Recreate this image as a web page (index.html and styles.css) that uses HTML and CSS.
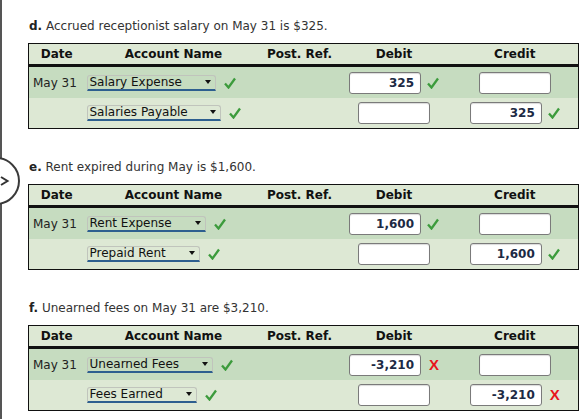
FILE: index.html
```html
<!DOCTYPE html>
<html>
<head>
<meta charset="utf-8">
<link rel="stylesheet" href="styles.css">
</head>
<body>
<div class="page">
  <div class="toggle">
    <svg width="12" height="14" viewBox="0 0 12 14"><polyline points="1,3 7.5,7 1,11" fill="none" stroke="#333" stroke-width="2"/></svg>
  </div>

  <section class="entry">
    <p class="title"><b>d.</b> Accrued receptionist salary on May 31 is $325.</p>
    <table class="journal">
      <colgroup><col class="c-date"><col class="c-acct"><col class="c-ref"><col class="c-debit"><col class="c-credit"></colgroup>
      <thead><tr><th>Date</th><th>Account Name</th><th>Post. Ref.</th><th>Debit</th><th>Credit</th></tr></thead>
      <tbody>
        <tr class="r1">
          <td class="date">May 31</td>
          <td class="acct"><div class="acct-wrap"><span class="sel w129">Salary Expense</span><span class="ok"><svg width="12" height="12" viewBox="0 0 12 12"><path d="M1 6.5 L4.5 10.5 L11 1.5" fill="none" stroke="#3c9b3c" stroke-width="2.3"/></svg></span></div></td>
          <td></td>
          <td class="amt"><div class="amt-wrap"><span class="inp">325</span><span class="ok"><svg width="12" height="12" viewBox="0 0 12 12"><path d="M1 6.5 L4.5 10.5 L11 1.5" fill="none" stroke="#3c9b3c" stroke-width="2.3"/></svg></span></div></td>
          <td class="amt"><div class="amt-wrap"><span class="inp"></span></div></td>
        </tr>
        <tr class="r2">
          <td class="date"></td>
          <td class="acct"><div class="acct-wrap"><span class="sel w134">Salaries Payable</span><span class="ok"><svg width="12" height="12" viewBox="0 0 12 12"><path d="M1 6.5 L4.5 10.5 L11 1.5" fill="none" stroke="#3c9b3c" stroke-width="2.3"/></svg></span></div></td>
          <td></td>
          <td class="amt"><div class="amt-wrap"><span class="inp"></span></div></td>
          <td class="amt"><div class="amt-wrap"><span class="inp">325</span><span class="ok"><svg width="12" height="12" viewBox="0 0 12 12"><path d="M1 6.5 L4.5 10.5 L11 1.5" fill="none" stroke="#3c9b3c" stroke-width="2.3"/></svg></span></div></td>
        </tr>
      </tbody>
    </table>
  </section>

  <section class="entry">
    <p class="title"><b>e.</b> Rent expired during May is $1,600.</p>
    <table class="journal">
      <colgroup><col class="c-date"><col class="c-acct"><col class="c-ref"><col class="c-debit"><col class="c-credit"></colgroup>
      <thead><tr><th>Date</th><th>Account Name</th><th>Post. Ref.</th><th>Debit</th><th>Credit</th></tr></thead>
      <tbody>
        <tr class="r1">
          <td class="date">May 31</td>
          <td class="acct"><div class="acct-wrap"><span class="sel w119">Rent Expense</span><span class="ok"><svg width="12" height="12" viewBox="0 0 12 12"><path d="M1 6.5 L4.5 10.5 L11 1.5" fill="none" stroke="#3c9b3c" stroke-width="2.3"/></svg></span></div></td>
          <td></td>
          <td class="amt"><div class="amt-wrap"><span class="inp">1,600</span><span class="ok"><svg width="12" height="12" viewBox="0 0 12 12"><path d="M1 6.5 L4.5 10.5 L11 1.5" fill="none" stroke="#3c9b3c" stroke-width="2.3"/></svg></span></div></td>
          <td class="amt"><div class="amt-wrap"><span class="inp"></span></div></td>
        </tr>
        <tr class="r2">
          <td class="date"></td>
          <td class="acct"><div class="acct-wrap"><span class="sel w113">Prepaid Rent</span><span class="ok"><svg width="12" height="12" viewBox="0 0 12 12"><path d="M1 6.5 L4.5 10.5 L11 1.5" fill="none" stroke="#3c9b3c" stroke-width="2.3"/></svg></span></div></td>
          <td></td>
          <td class="amt"><div class="amt-wrap"><span class="inp"></span></div></td>
          <td class="amt"><div class="amt-wrap"><span class="inp">1,600</span><span class="ok"><svg width="12" height="12" viewBox="0 0 12 12"><path d="M1 6.5 L4.5 10.5 L11 1.5" fill="none" stroke="#3c9b3c" stroke-width="2.3"/></svg></span></div></td>
        </tr>
      </tbody>
    </table>
  </section>

  <section class="entry">
    <p class="title"><b>f.</b> Unearned fees on May 31 are $3,210.</p>
    <table class="journal">
      <colgroup><col class="c-date"><col class="c-acct"><col class="c-ref"><col class="c-debit"><col class="c-credit"></colgroup>
      <thead><tr><th>Date</th><th>Account Name</th><th>Post. Ref.</th><th>Debit</th><th>Credit</th></tr></thead>
      <tbody>
        <tr class="r1">
          <td class="date">May 31</td>
          <td class="acct"><div class="acct-wrap"><span class="sel w126">Unearned Fees</span><span class="ok"><svg width="12" height="12" viewBox="0 0 12 12"><path d="M1 6.5 L4.5 10.5 L11 1.5" fill="none" stroke="#3c9b3c" stroke-width="2.3"/></svg></span></div></td>
          <td></td>
          <td class="amt"><div class="amt-wrap"><span class="inp">-3,210</span><span class="bad">X</span></div></td>
          <td class="amt"><div class="amt-wrap"><span class="inp"></span></div></td>
        </tr>
        <tr class="r2">
          <td class="date"></td>
          <td class="acct"><div class="acct-wrap"><span class="sel w110">Fees Earned</span><span class="ok"><svg width="12" height="12" viewBox="0 0 12 12"><path d="M1 6.5 L4.5 10.5 L11 1.5" fill="none" stroke="#3c9b3c" stroke-width="2.3"/></svg></span></div></td>
          <td></td>
          <td class="amt"><div class="amt-wrap"><span class="inp"></span></div></td>
          <td class="amt"><div class="amt-wrap"><span class="inp">-3,210</span><span class="bad">X</span></div></td>
        </tr>
      </tbody>
    </table>
  </section>
</div>
</body>
</html>
```

FILE: styles.css
```css
html, body {
  margin: 0;
  padding: 0;
  background: #fff;
}
body {
  font-family: "DejaVu Sans", Verdana, sans-serif;
  font-size: 12px;
  color: #222;
  overflow: hidden;
}
.page {
  position: relative;
  width: 585px;
  height: 419px;
  border-left: 2px solid #555;
  padding: 18px 0 0 26px;
  box-sizing: border-box;
}
.toggle {
  position: absolute;
  left: -30px;
  top: 157px;
  width: 44px;
  height: 44px;
  border: 2px solid #3a3a3a;
  border-radius: 50%;
  background: #fff;
  display: flex;
  align-items: center;
  justify-content: flex-end;
  box-sizing: content-box;
}
.toggle svg {
  margin-right: 6px;
}
.entry {
  margin: 0 0 30px 0;
}
.title {
  margin: 0 0 9px 1px;
  line-height: 16px;
  color: #333;
}
.title b {
  color: #222;
}
.journal {
  width: 550px;
  border-collapse: collapse;
  table-layout: fixed;
  border: 1px solid #111;
}
.c-date { width: 56px; }
.c-acct { width: 178px; }
.c-ref { width: 74px; }
.c-debit { width: 115px; }
.c-credit { width: 127px; }
.journal th {
  background: #dde8d4;
  font-weight: bold;
  color: #111;
  height: 20px;
  padding: 0;
  text-align: center;
  border-bottom: 3px solid #111;
}
.journal td {
  padding: 0;
}
.r1 td {
  background: #c6dcc0;
  height: 31px;
}
.r2 td {
  background: #dde8d4;
  height: 30px;
}
.date {
  padding-left: 4px !important;
  color: #222;
}
.acct-wrap {
  display: flex;
  align-items: center;
  padding-left: 2px;
}
.sel {
  position: relative;
  box-sizing: border-box;
  height: 16px;
  line-height: 12px;
  padding-left: 2px;
  border: 1px solid #c0c4bc;
  border-bottom: 2px solid #2d5f8f;
  border-radius: 3px 3px 0 0;
  color: #111;
  white-space: nowrap;
}
.sel::after {
  content: "";
  position: absolute;
  right: 4px;
  top: 4px;
  border-left: 3px solid transparent;
  border-right: 3px solid transparent;
  border-top: 4px solid #111;
}
.w129 { width: 129px; }
.w134 { width: 134px; }
.w119 { width: 119px; }
.w113 { width: 113px; }
.w126 { width: 126px; }
.w110 { width: 110px; }
.ok {
  display: inline-flex;
  margin-left: 8px;
}
.amt-wrap {
  display: flex;
  align-items: center;
  justify-content: center;
}
.inp {
  box-sizing: border-box;
  width: 72px;
  height: 22px;
  line-height: 20px;
  border: 1px solid #7a7a7a;
  border-radius: 3px;
  background: #fff;
  box-shadow: inset 0 1px 1px rgba(0,0,0,0.15);
  text-align: right;
  padding-right: 6px;
  font-weight: bold;
  color: #1c2a44;
}
.amt-wrap .ok {
  margin-left: 6px;
}
.bad {
  margin-left: 8px;
  font-family: "Liberation Sans", Arial, sans-serif;
  font-weight: bold;
  font-size: 15px;
  color: #e8141c;
  line-height: 14px;
}
```
